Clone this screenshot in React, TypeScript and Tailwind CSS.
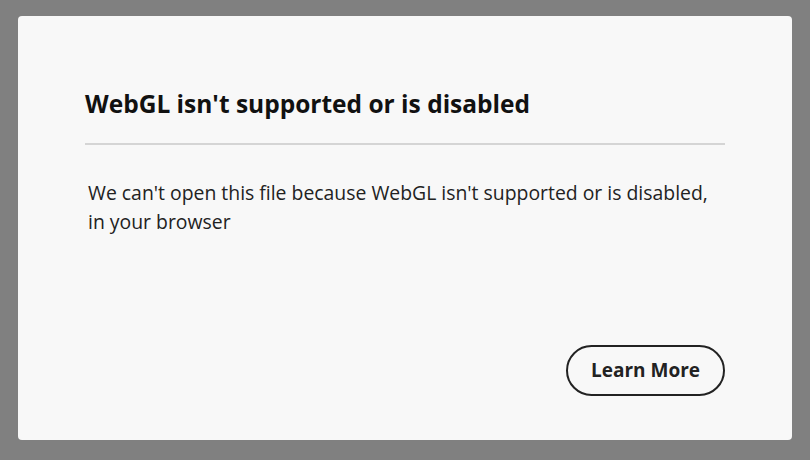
export default function App() {
  return (
    <div className="h-[460px] w-full bg-[#808080] pl-[18px] pr-[18px] pt-[16px]" style={{ fontFamily: '"Open Sans", "Noto Sans", sans-serif' }}>
      <div className="flex h-[424px] w-[774px] flex-col rounded-[4px] bg-[#f8f8f8] px-[67px] pt-[71px]">
        <h1 className="text-[24.5px] font-bold leading-[34px] text-[#111111]">WebGL isn't supported or is disabled</h1>
        <div className="mt-[22px] h-[2px] w-full bg-[#d5d5d5]" />
        <p className="mt-[33px] pl-[3px] text-[19.4px] leading-[29px] text-[#222222]">
          We can't open this file because WebGL isn't supported or is disabled,
          <br />
          in your browser
        </p>
        <div className="mt-auto mb-[44px] flex justify-end">
          <button className="h-[51px] w-[159px] rounded-full border-2 border-[#222222] text-[19px] font-bold text-[#222222]">
            Learn More
          </button>
        </div>
      </div>
    </div>
  )
}
